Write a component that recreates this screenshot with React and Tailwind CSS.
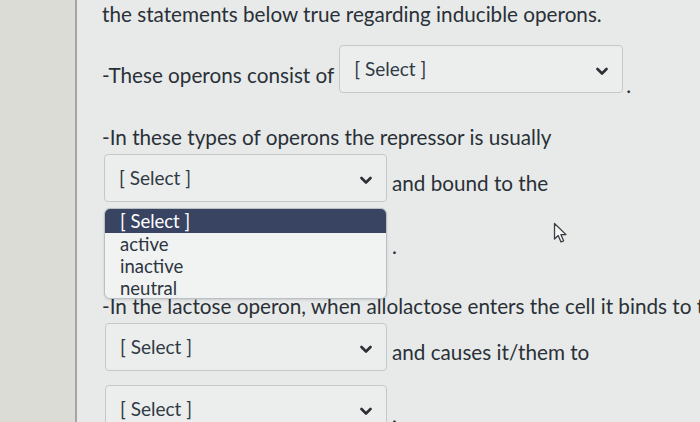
import React from "react";

const Chevron = () => (
  <svg width="12" height="9" viewBox="0 0 12 9" className="shrink-0">
    <polyline points="1.5,2 6,6.5 10.5,2" fill="none" stroke="#2a3036" strokeWidth="2.6" strokeLinecap="round" strokeLinejoin="round" />
  </svg>
);

const Select = ({ w, extra = "" }) => (
  <div className={`h-[48px] ${w} shrink-0 rounded-[4px] border border-[#c3c8cc] bg-[#eceeed] flex items-center justify-between pl-[14px] pr-[14px] ${extra}`}>
    <span className="text-[19px] text-[#2f3a44] leading-none -mt-[2px]">[ Select ]</span>
    <span className="mt-[4px]"><Chevron /></span>
  </div>
);

export default function App() {
  return (
    <div className="w-[700px] h-[422px] overflow-hidden flex bg-[#e7eae8] text-[#2a3038]" style={{ fontFamily: "Lato, 'Open Sans', sans-serif" }}>
      <div className="w-[77px] shrink-0 bg-[#dcdcd6] border-r-2 border-[#a3a5a6]" />
      <div className="relative flex-1 pl-[25px] whitespace-nowrap text-[20.7px]">
        <div className="h-[28px] leading-[28px]">the statements below true regarding inducible operons.</div>

        <div className="mt-[17px] h-[48px] flex items-start">
          <span className="leading-[28px] mt-[16px]">-These operons consist of</span>
          <Select w="w-[284px]" extra="ml-[5px]" />
          <span className="leading-[28px] mt-[26px] ml-[3px]">.</span>
        </div>

        <div className="mt-[30px] h-[28px] leading-[28px]">-In these types of operons the repressor is usually</div>

        <div className="mt-[3px] h-[48px] flex items-start">
          <Select w="w-[283px]" extra="ml-[2px]" />
          <span className="leading-[28px] mt-[15px] ml-[5px]">and bound to the</span>
        </div>

        <div className="mt-[20px] h-[48px] flex items-start">
          <Select w="w-[283px]" extra="ml-[2px]" />
          <span className="leading-[28px] mt-[10px] ml-[5px]">.</span>
        </div>

        <div className="mt-[22px] h-[28px] leading-[28px]">-In the lactose operon, when allolactose enters the cell it binds to the</div>

        <div className="mt-[3px] h-[48px] flex items-start">
          <Select w="w-[282px]" extra="ml-[3px]" />
          <span className="leading-[28px] mt-[15px] ml-[5px]">and causes it/them to</span>
        </div>

        <div className="mt-[14px] h-[48px] flex items-start">
          <Select w="w-[282px]" extra="ml-[3px]" />
          <span className="leading-[28px] mt-[16px] ml-[5px]">.</span>
        </div>

        {/* open dropdown list */}
        <div className="absolute left-[27px] top-[208px] w-[283px] h-[91px] rounded-[6px] border border-[#b9bfc4] bg-[#f1f3f3] overflow-hidden shadow-sm">
          <div className="h-[24px] bg-[#394362] text-white text-[18.5px] leading-[24px] pl-[15px]">[ Select ]</div>
          <div className="text-[18.5px] leading-[22px] pl-[15px] text-[#2c3540]">
            <div>active</div>
            <div>inactive</div>
            <div>neutral</div>
          </div>
        </div>

        {/* mouse cursor */}
        <svg className="absolute left-[476px] top-[222px]" width="16" height="22" viewBox="0 0 16 22">
          <path d="M1.5 1.5 L1.5 17 L5.2 13.6 L8 20 L10.6 18.8 L7.9 12.6 L13 12.6 Z" fill="#f4f6f5" stroke="#3a3f44" strokeWidth="1.3" strokeLinejoin="round" />
        </svg>
      </div>
    </div>
  );
}
